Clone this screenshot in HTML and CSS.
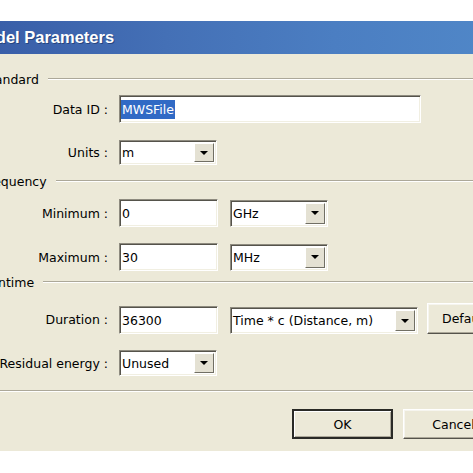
FILE: index.html
```html
<!DOCTYPE html>
<html>
<head>
<meta charset="utf-8">
<title>Model Parameters</title>
<link rel="stylesheet" href="styles.css">
</head>
<body>
<div class="dialog">
  <div class="titlebar"><span class="title">Model Parameters</span></div>
  <div class="content">
    <div class="group-head head-standard"><span>Standard</span><div class="rule"></div></div>
    <div class="row row-first">
      <span class="lbl">Data ID :</span>
      <div class="field field-wide"><span class="selected">MWSFile</span></div>
    </div>
    <div class="row row-units">
      <span class="lbl">Units :</span>
      <div class="combo combo-units"><span class="value">m</span><span class="drop"></span></div>
    </div>

    <div class="group-head head-freq"><span>Frequency</span><div class="rule"></div></div>
    <div class="row row-min">
      <span class="lbl">Minimum :</span>
      <div class="field"><span>0</span></div>
      <div class="combo"><span class="value">GHz</span><span class="drop"></span></div>
    </div>
    <div class="row row-next">
      <span class="lbl">Maximum :</span>
      <div class="field"><span>30</span></div>
      <div class="combo"><span class="value">MHz</span><span class="drop"></span></div>
    </div>

    <div class="group-head head-run"><span>Runtime</span><div class="rule"></div></div>
    <div class="row row-duration">
      <span class="lbl lbl-duration">Duration :</span>
      <div class="field"><span>36300</span></div>
      <div class="combo combo-time"><span class="value">Time * c (Distance, m)</span><span class="drop"></span></div>
      <div class="btn btn-default">Default</div>
    </div>
    <div class="row row-next">
      <span class="lbl">Residual energy :</span>
      <div class="combo combo-res"><span class="value">Unused</span><span class="drop"></span></div>
    </div>

    <div class="separator"></div>
    <div class="actions">
      <div class="btn btn-ok">OK</div>
      <div class="btn">Cancel</div>
    </div>
  </div>
</div>
</body>
</html>
```
FILE: styles.css
```css
html, body {
  margin: 0;
  height: 100%;
  background: #ffffff;
  overflow: hidden;
}
body {
  font-family: "DejaVu Sans", Verdana, sans-serif;
  font-size: 12.5px;
  color: #000;
}
.dialog {
  width: 560px;
  margin: 21px 0 0 -30px;
  background: #ece9d8;
}
.titlebar {
  height: 33px;
  box-sizing: border-box;
  display: flex;
  align-items: center;
  padding-left: 2px;
  background: linear-gradient(90deg, #375ba6 0%, #4470b6 35%, #4b7ec2 65%, #5189c9 100%);
}
.title {
  font-family: "Liberation Sans", Arial, sans-serif;
  font-weight: bold;
  font-size: 16.5px;
  color: #fff;
  text-shadow: 1px 1px 0 #26457f;
}
.content {
  padding: 17px 12px 12px 12px;
}
.group-head {
  display: flex;
  align-items: center;
  height: 16px;
  gap: 9px;
}
.group-head .rule {
  flex: 1;
  height: 0;
  border-top: 1px solid #aca899;
  border-bottom: 1px solid #ffffff;
}
.head-freq { margin-top: 8px; }
.head-run { margin-top: 3px; }

.row {
  display: flex;
  align-items: center;
  gap: 12px;
  margin-top: 16px;
}
.row-first { margin-top: 8px; }
.row-units { margin-top: 17px; }
.row-min { margin-top: 10px; }
.row-duration { margin-top: 13px; align-items: flex-end; gap: 12px; }
.lbl {
  width: 126px;
  margin-right: -1px;
  text-align: right;
  white-space: nowrap;
}
.lbl-duration {
  line-height: 28px;
}
.field {
  width: 99px;
  height: 28px;
  box-sizing: border-box;
  display: flex;
  align-items: center;
  padding-left: 1px;
  background: #fff;
  border: 1px solid;
  border-color: #8e8b7f #ffffff #ffffff #8e8b7f;
  box-shadow: inset 1px 1px 0 #55534b, inset -1px -1px 0 #f1efe2;
}
.field > span { padding-left: 1px; }
.field-wide { width: 302px; }
.selected {
  background: #316ac5;
  color: #fff;
  padding: 2px 1px;
}
.combo {
  width: 98px;
  height: 27px;
  box-sizing: border-box;
  display: flex;
  align-items: stretch;
  background: #fff;
  border: 1px solid;
  border-color: #8e8b7f #ffffff #ffffff #8e8b7f;
  box-shadow: inset 1px 1px 0 #55534b, inset -1px -1px 0 #f1efe2;
  padding: 2px;
}
.combo-units { height: 25px; }
.combo-res { height: 26px; }
.combo-time { width: 188px; }
.combo .value {
  flex: 1;
  display: flex;
  align-items: center;
  white-space: nowrap;
}
.drop {
  width: 20px;
  box-sizing: border-box;
  display: flex;
  align-items: center;
  justify-content: center;
  background: #e4e1d3;
  border: 1px solid;
  border-color: #ffffff #716f64 #716f64 #ffffff;
}
.drop::after {
  content: "";
  width: 0;
  height: 0;
  border-left: 4px solid transparent;
  border-right: 4px solid transparent;
  border-top: 4px solid #000;
}
.btn {
  width: 101px;
  height: 30px;
  box-sizing: border-box;
  display: flex;
  align-items: center;
  justify-content: center;
  background: #ece9d8;
  border: 1px solid;
  border-color: #ffffff #55534b #55534b #ffffff;
  box-shadow: inset -1px -1px 0 #aca899, inset 1px 1px 0 #f6f5ef;
}
.btn-default {
  width: 80px;
  height: 31px;
  margin-left: -3px;
  justify-content: flex-start;
  padding-left: 14px;
}
.btn-ok {
  border: 2px solid #2a2a26;
  box-shadow: inset 1px 1px 0 #ffffff, inset -1px -1px 0 #aca899;
}
.separator {
  margin-top: 14px;
  height: 0;
  border-top: 1px solid #aca899;
  border-bottom: 1px solid #ffffff;
  margin-left: -12px;
  margin-right: -12px;
}
.actions {
  display: flex;
  justify-content: flex-end;
  gap: 10px;
  margin-top: 17px;
  padding-right: 14px;
}
```
